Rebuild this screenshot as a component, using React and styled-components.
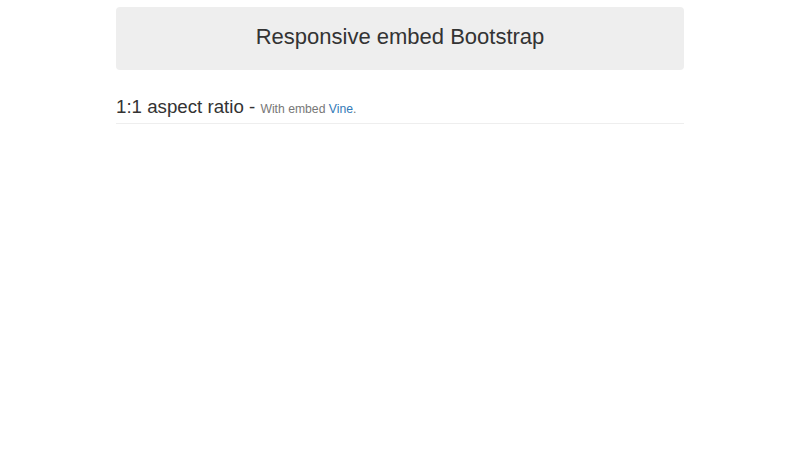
import React from "react";
import styled, { createGlobalStyle } from "styled-components";

const Global = createGlobalStyle`
  html, body { margin: 0; padding: 0; background: #fff; }
  body { font-family: "Liberation Sans", Arial, Helvetica, sans-serif; color: #333; }
`;

const Container = styled.div`
  width: 568px;
  margin: 0 auto;
  padding-top: 7px;
`;

const Jumbotron = styled.div`
  height: 63px;
  background: #eeeeee;
  border-radius: 4px;
  display: flex;
  align-items: center;
  justify-content: center;
`;

const Title = styled.h2`
  margin: 0;
  font-size: 22px;
  font-weight: 400;
  line-height: 1.1;
  color: #333;
  transform: translateY(-1px);
`;

const PageHeader = styled.div`
  margin-top: 27px;
  padding-bottom: 5px;
  border-bottom: 1px solid #eee;
`;

const Heading = styled.h3`
  margin: 0;
  font-size: 18.7px;
  font-weight: 400;
  line-height: 1.1;
  color: #333;
`;

const Small = styled.small`
  font-size: 12.2px;
  color: #777;
`;

const Link = styled.a`
  color: #337ab7;
  text-decoration: none;
`;

export default function App() {
  return (
    <>
      <Global />
      <Container>
        <Jumbotron>
          <Title>Responsive embed Bootstrap</Title>
        </Jumbotron>
        <PageHeader>
          <Heading>
            1:1 aspect ratio - <Small>With embed <Link href="#">Vine</Link>.</Small>
          </Heading>
        </PageHeader>
      </Container>
    </>
  );
}
